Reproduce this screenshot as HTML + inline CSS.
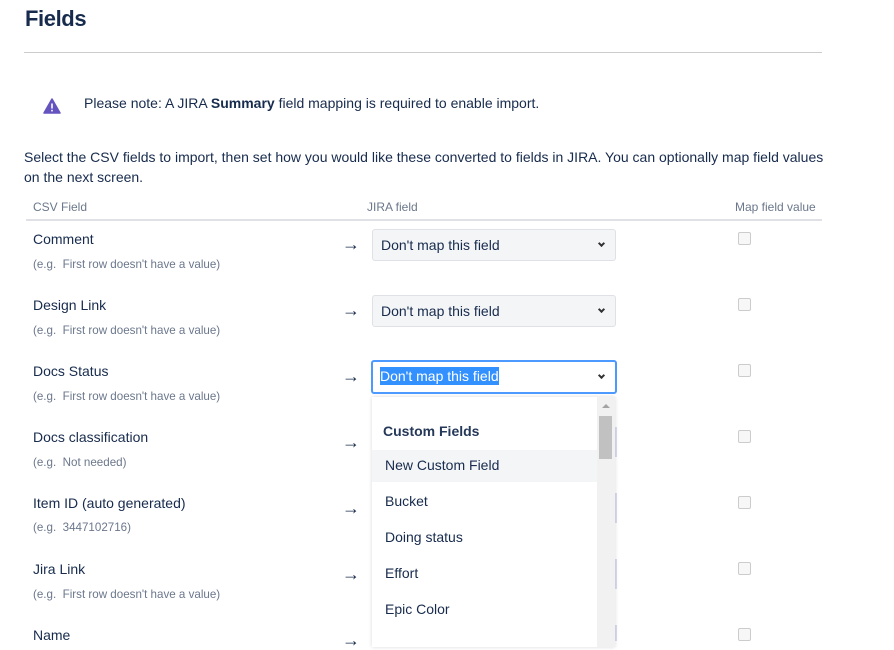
<!DOCTYPE html>
<html><head><meta charset="utf-8"><style>
*{margin:0;padding:0;box-sizing:border-box}
body{width:894px;height:641px;overflow:hidden;background:#fff;font-family:"Liberation Sans",sans-serif;color:#172b4d;position:relative;font-size:14px}
.a{position:absolute;white-space:nowrap}
h1{position:absolute;left:25px;top:6px;font-size:22px;font-weight:bold;color:#172b4d;letter-spacing:-0.4px}
.hr{position:absolute;left:24px;top:52px;width:798px;height:1px;background:#ccc}
.th{color:#6b778c;font-size:12px;top:200px}
.lbl{font-size:14px;left:33px}
.sub{font-size:11.6px;color:#6b778c;left:33px}
.arr{left:342px;font-size:18px;line-height:18px}
.sel{position:absolute;left:372px;width:244px;height:32px;background:#f4f5f7;border:1px solid #dfe1e6;border-radius:3px;font-size:14px;padding:7px 0 0 8px}
.chev{position:absolute;right:11px;top:11px;width:5px;height:5px;border-right:2px solid #333;border-bottom:2px solid #333;transform:rotate(45deg)}
.cb{position:absolute;left:738px;width:13px;height:13px;border:1px solid #ccc;border-radius:2px;background:#f7f7f7}
</style></head><body>
<h1>Fields</h1>
<div class="hr"></div>
<svg class="a" style="left:43px;top:98px" width="18" height="16" viewBox="0 0 18 16"><path d="M9 1 L17 15 L1 15 Z" fill="#6554c0" stroke="#6554c0" stroke-width="1.5" stroke-linejoin="round"/><rect x="8.2" y="5.5" width="1.6" height="5" fill="#fff"/><rect x="8.2" y="11.8" width="1.6" height="1.6" fill="#fff"/></svg>
<div class="a" style="left:84px;top:95px">Please note: A JIRA <b>Summary</b> field mapping is required to enable import.</div>
<div class="a" style="left:24px;top:147px;line-height:20px">Select the CSV fields to import, then set how you would like these converted to fields in JIRA. You can optionally map field values<br>on the next screen.</div>
<div class="a th" style="left:33px">CSV Field</div>
<div class="a th" style="left:367px">JIRA field</div>
<div class="a th" style="left:735px">Map field value</div>
<div class="a" style="left:26px;top:219px;width:796px;height:2px;background:#dfe1e6"></div>

<div class="a lbl" style="top:231px">Comment</div><div class="a sub" style="top:258px">(e.g.&nbsp; First row doesn't have a value)</div>
<div class="a arr" style="top:235px">→</div>
<div class="sel" style="top:229px">Don't map this field<div class="chev"></div></div>
<div class="cb" style="top:232px"></div>

<div class="a lbl" style="top:297px">Design Link</div><div class="a sub" style="top:324px">(e.g.&nbsp; First row doesn't have a value)</div>
<div class="a arr" style="top:301px">→</div>
<div class="sel" style="top:295px">Don't map this field<div class="chev"></div></div>
<div class="cb" style="top:298px"></div>

<div class="a lbl" style="top:363px">Docs Status</div><div class="a sub" style="top:390px">(e.g.&nbsp; First row doesn't have a value)</div>
<div class="a arr" style="top:367px">→</div>
<div class="sel" style="top:360px;left:371px;width:246px;height:34px;background:#fff;border:2px solid #4c9aff;padding:6px 0 0 7px"><span style="background:#3390ff;color:#fff;padding:1px 0">Don't map this field</span><div class="chev"></div></div>
<div class="cb" style="top:364px"></div>

<div class="a lbl" style="top:429px">Docs classification</div><div class="a sub" style="top:456px">(e.g.&nbsp; Not needed)</div>
<div class="a arr" style="top:433px">→</div>
<div class="cb" style="top:430px"></div>

<div class="a lbl" style="top:495px">Item ID (auto generated)</div><div class="a sub" style="top:521px">(e.g.&nbsp; 3447102716)</div>
<div class="a arr" style="top:499px">→</div>
<div class="cb" style="top:496px"></div>

<div class="a lbl" style="top:561px">Jira Link</div><div class="a sub" style="top:588px">(e.g.&nbsp; First row doesn't have a value)</div>
<div class="a arr" style="top:565px">→</div>
<div class="cb" style="top:562px"></div>

<div class="a lbl" style="top:627px">Name</div>
<div class="a arr" style="top:631px">→</div>
<div class="cb" style="top:628px"></div>

<div class="a" style="left:615px;top:427px;width:2px;height:30px;background:#dcdcf0"></div>
<div class="a" style="left:615px;top:493px;width:2px;height:30px;background:#dcdcf0"></div>
<div class="a" style="left:615px;top:559px;width:2px;height:30px;background:#dcdcf0"></div>
<div class="a" style="left:615px;top:625px;width:2px;height:16px;background:#dcdcf0"></div>

<div class="a" style="left:372px;top:397px;width:243px;height:250px;background:#fff;box-shadow:0 0 4px rgba(0,0,0,0.15)">
<div class="a" style="left:11px;top:26px;font-weight:bold;font-size:14px;color:#253858">Custom Fields</div>
<div class="a" style="left:0;top:53px;width:225px;height:32px;background:#f4f5f7"></div>
<div class="a" style="left:13px;top:60px">New Custom Field</div>
<div class="a" style="left:13px;top:96px">Bucket</div>
<div class="a" style="left:13px;top:132px">Doing status</div>
<div class="a" style="left:13px;top:168px">Effort</div>
<div class="a" style="left:13px;top:204px">Epic Color</div>
<div class="a" style="left:225px;top:0;width:18px;height:250px;background:#f1f1f1"></div>
<div class="a" style="left:230px;top:7px;width:0;height:0;border-left:4px solid transparent;border-right:4px solid transparent;border-bottom:4px solid #a3a3a3"></div>
<div class="a" style="left:227px;top:19px;width:13px;height:43px;background:#c1c1c1"></div>
</div>
</body></html>
